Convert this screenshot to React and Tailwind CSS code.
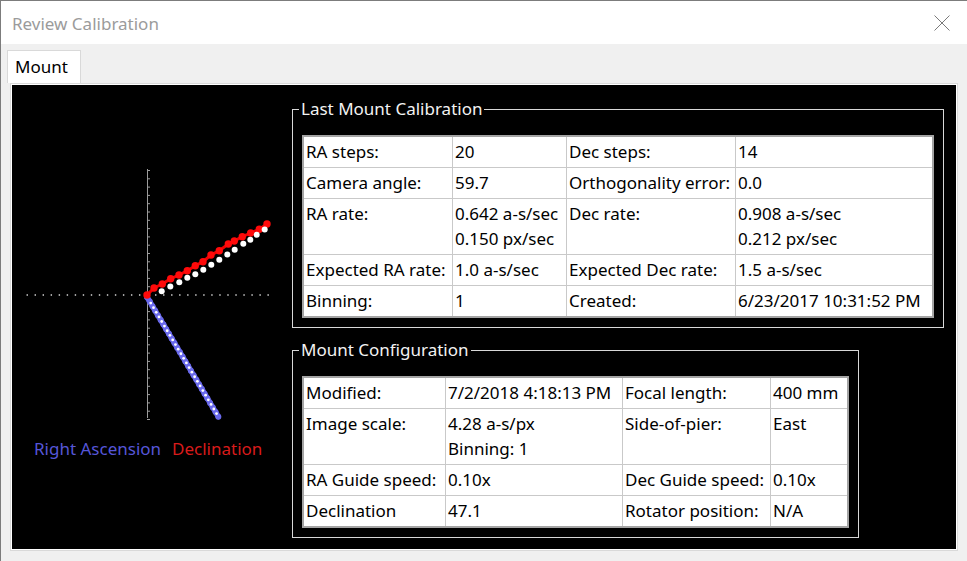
import React from 'react'

const calibrationRows = [
  ['RA steps:', '20', 'Dec steps:', '14'],
  ['Camera angle:', '59.7', 'Orthogonality error:', '0.0'],
  ['RA rate:', '0.642 a-s/sec\n0.150 px/sec', 'Dec rate:', '0.908 a-s/sec\n0.212 px/sec'],
  ['Expected RA rate:', '1.0 a-s/sec', 'Expected Dec rate:', '1.5 a-s/sec'],
  ['Binning:', '1', 'Created:', '6/23/2017 10:31:52 PM'],
]

const configRows = [
  ['Modified:', '7/2/2018 4:18:13 PM', 'Focal length:', '400 mm'],
  ['Image scale:', '4.28 a-s/px\nBinning: 1', 'Side-of-pier:', 'East'],
  ['RA Guide speed:', '0.10x', 'Dec Guide speed:', '0.10x'],
  ['Declination', '47.1', 'Rotator position:', 'N/A'],
]

// measured points of the calibration steps (chart coords, origin at 135,210)
const redDots = [
  [135, 210], [142, 203], [150.3, 199], [158.7, 193.7], [167, 190], [175.3, 185.7],
  [183.3, 180.7], [191, 176.7], [199, 170], [207.3, 165.7], [216.3, 159], [222.3, 156],
  [230.3, 151.7], [238.7, 148], [247.3, 144.3], [255, 139],
]

const whiteDots = [
  [149.7, 205.7], [158.3, 201], [167.3, 196.7], [175.3, 192.3], [183.3, 188.7], [191.3, 184.3],
  [199.3, 179.3], [207.3, 174.3], [215.3, 169], [222.7, 164.3], [231.3, 158.3], [238.3, 154.3],
  [244.7, 149.3], [252.7, 144],
]

const ticks = Array.from({ length: 31 }, (_, i) => i - 15)
const blueSteps = Array.from({ length: 27 }, (_, i) => i / 26)

function CalibrationChart() {
  const bx0 = 135, by0 = 212, bx1 = 206.3, by1 = 331.7
  return (
    <svg width="280" height="340" viewBox="0 0 280 340">
      {/* vertical axis */}
      <line x1="135.5" y1="84" x2="135.5" y2="333" stroke="#9c9c9c" strokeWidth="1" />
      {ticks.map((k) => (
        <line key={'v' + k} x1="135" x2="138" y1={210 + k * 8.3} y2={210 + k * 8.3} stroke="#9c9c9c" strokeWidth="1" />
      ))}
      {/* horizontal axis, ticks only */}
      {ticks.map((k) => (
        <rect key={'h' + k} x={135 + k * 8.03} y="209" width="1.4" height="2" fill="#a0a0a0" />
      ))}

      {/* RA */}
      <line x1={bx0} y1={by0} x2={bx1} y2={by1} stroke="#6262e4" strokeWidth="5.5" strokeLinecap="round" />
      {blueSteps.map((t, i) => (
        <circle key={'b' + i} cx={bx0 + (bx1 - bx0) * t} cy={by0 + (by1 - by0) * t} r="3" fill="#6a6aec" />
      ))}
      {blueSteps.slice(1, -1).map((t, i) => (
        <circle key={'bw' + i} cx={bx0 + (bx1 - bx0) * t + 1} cy={by0 + (by1 - by0) * t + 1.5} r="1.4" fill="#ffffff" />
      ))}

      {/* Dec */}
      <polyline points={redDots.map((p) => p.join(',')).join(' ')} fill="none" stroke="#f00000" strokeWidth="3" />
      {redDots.map(([x, y], i) => (
        <circle key={'r' + i} cx={x} cy={y} r="3.7" fill="#ff0a0a" />
      ))}
      {whiteDots.map(([x, y], i) => (
        <circle key={'w' + i} cx={x} cy={y + 0.5} r="3" fill="#ffffff" />
      ))}
    </svg>
  )
}

function DataGrid({ cols, rows }) {
  return (
    <div className={`grid ${cols} gap-px bg-[#c9c9c9] border-2 border-[#a4a4a4]`}>
      {rows.flat().map((cell, i) => (
        <div key={i} className="bg-white pl-[2px] pr-1 pt-[2px] pb-[3px] leading-[25px] whitespace-pre-line text-black">
          {cell}
        </div>
      ))}
    </div>
  )
}

function GroupBox({ title, children, className = '' }) {
  return (
    <fieldset className={`border border-[#d8d8d8] px-[9px] pt-[14px] pb-[9px] ${className}`}>
      <legend className="ml-[-3px] px-[2px] leading-[24px] text-[#f2f2f2]">{title}</legend>
      {children}
    </fieldset>
  )
}

export default function App() {
  return (
    <div className="w-[967px] h-[561px] overflow-hidden bg-[#f0f0f0] border-t border-l border-[#7c7c7c] flex flex-col font-['Noto_Sans',sans-serif] text-[17px]">
      {/* Title bar */}
      <div className="h-[43px] shrink-0 bg-white flex items-center justify-between pl-[11px] pr-[17px]">
        <span className="pt-[2px] leading-[24px] text-[#9b9b9b]">Review Calibration</span>
        <svg width="16" height="16" viewBox="0 0 16 16">
          <path d="M0.5 0.5L15.5 15.5M15.5 0.5L0.5 15.5" stroke="#7a7a7a" strokeWidth="1" fill="none" />
        </svg>
      </div>

      {/* Tabs */}
      <div className="pt-[6px] pl-[6px] flex shrink-0">
        <div className="h-[33px] w-[74px] bg-white border border-b-0 border-[#d9d9d9] pl-[7px] pt-[4px] leading-[24px] text-black">
          Mount
        </div>
      </div>

      {/* Tab page */}
      <div className="ml-[9px] w-[948px] h-[468px] shrink-0 border border-[#d9d9d9] bg-white p-px">
        <div className="h-full bg-black flex">
          <div className="w-[280px] shrink-0 flex flex-col">
            <CalibrationChart />
            <div className="mt-[12px] pl-[22px] flex gap-[11px] leading-[24px]">
              <span className="text-[#5656d8]">Right Ascension</span>
              <span className="text-[#d81b1b]">Declination</span>
            </div>
          </div>

          <div className="flex flex-col items-start pt-[12px]">
            <GroupBox title="Last Mount Calibration">
              <DataGrid cols="grid-cols-[148px_113px_168px_196px]" rows={calibrationRows} />
            </GroupBox>
            <GroupBox title="Mount Configuration" className="mt-[10px]">
              <DataGrid cols="grid-cols-[141px_176px_147px_76px]" rows={configRows} />
            </GroupBox>
          </div>
        </div>
      </div>
    </div>
  )
}
